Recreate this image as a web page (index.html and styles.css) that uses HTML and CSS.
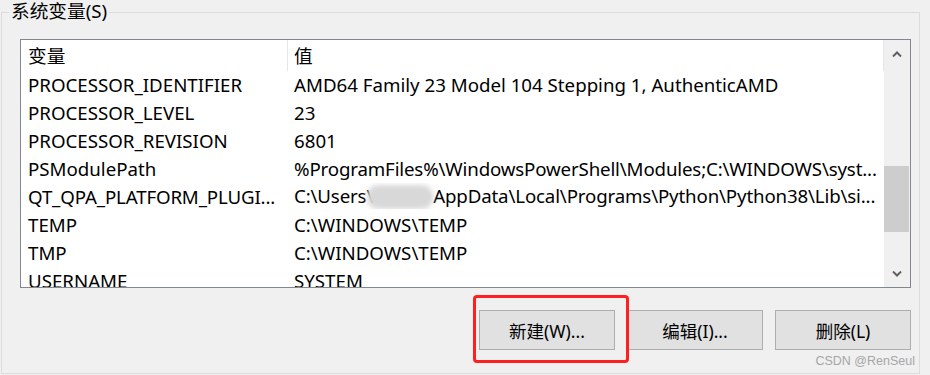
FILE: index.html
```html
<!DOCTYPE html>
<html lang="zh-CN">
<head>
  <meta charset="UTF-8">
  <title>系统变量</title>
  <link rel="stylesheet" href="styles.css">
</head>
<body>
  <div class="group">
    <span class="group-title">系统变量(S)</span>

    <div class="listview">
      <div class="columns">
        <div class="row head">
          <div class="cell name">变量</div>
          <div class="cell value">值</div>
        </div>
        <div class="row">
          <div class="cell name">PROCESSOR_IDENTIFIER</div>
          <div class="cell value">AMD64 Family 23 Model 104 Stepping 1, AuthenticAMD</div>
        </div>
        <div class="row">
          <div class="cell name">PROCESSOR_LEVEL</div>
          <div class="cell value">23</div>
        </div>
        <div class="row">
          <div class="cell name">PROCESSOR_REVISION</div>
          <div class="cell value">6801</div>
        </div>
        <div class="row">
          <div class="cell name">PSModulePath</div>
          <div class="cell value long">%ProgramFiles%\WindowsPowerShell\Modules;C:\WINDOWS\syst...</div>
        </div>
        <div class="row">
          <div class="cell name long">QT_QPA_PLATFORM_PLUGI...</div>
          <div class="cell value long">C:\Users\<span class="blur"></span>AppData\Local\Programs\Python\Python38\Lib\si...</div>
        </div>
        <div class="row">
          <div class="cell name">TEMP</div>
          <div class="cell value">C:\WINDOWS\TEMP</div>
        </div>
        <div class="row">
          <div class="cell name">TMP</div>
          <div class="cell value">C:\WINDOWS\TEMP</div>
        </div>
        <div class="row">
          <div class="cell name">USERNAME</div>
          <div class="cell value">SYSTEM</div>
        </div>
      </div>

      <div class="scrollbar">
        <div class="arrow">
          <svg width="10" height="6" viewBox="0 0 10 6"><polyline points="1,5.5 5,1.5 9,5.5" fill="none" stroke="#606060" stroke-width="2"/></svg>
        </div>
        <div class="track"><div class="thumb"></div></div>
        <div class="arrow">
          <svg width="10" height="6" viewBox="0 0 10 6"><polyline points="1,0.5 5,4.5 9,0.5" fill="none" stroke="#606060" stroke-width="2"/></svg>
        </div>
      </div>
    </div>

    <div class="buttons">
      <span class="marked"><button class="btn">新建(W)...</button></span>
      <button class="btn">编辑(I)...</button>
      <button class="btn">删除(L)</button>
    </div>

    <span class="watermark">CSDN @RenSeul</span>
  </div>
</body>
</html>
```

FILE: styles.css
```css
* {
  margin: 0;
  padding: 0;
  box-sizing: border-box;
}

body {
  font-family: 'Noto Sans', 'Noto Sans CJK SC', sans-serif;
  font-size: 18.7px;
  color: #000;
  background: #f0f0f0;
  width: 930px;
  height: 375px;
  overflow: hidden;
}

/* 分组框 */
.group {
  position: relative;
  margin: 12px 0 0 1px;
  width: 919px;
  height: 362px;
  border: 1px solid #dcdcdc;
  padding: 0 8px 0 18px;
}

.group-title {
  position: absolute;
  top: -12px;
  left: 7px;
  padding: 0 2px;
  background: #f0f0f0;
  line-height: 20px;
}

/* 列表 */
.listview {
  display: flex;
  margin-top: 26px;
  height: 249px;
  border: 1px solid #828790;
  background: #fff;
}

.columns {
  flex: 1;
  overflow: hidden;
}

.row {
  display: flex;
  height: 28px;
  padding-bottom: 2px;
  align-items: center;
  white-space: nowrap;
}

.row.head {
  height: 31px;
  padding-bottom: 0;
  align-items: stretch;
}

.cell {
  overflow: hidden;
}

.cell.name {
  width: 267px;
  padding-left: 7px;
}

.cell.value {
  flex: 1;
  padding-left: 6px;
}

.cell.long {
  letter-spacing: -0.15px;
}

.head .cell {
  display: flex;
  align-items: center;
  padding-bottom: 2px;
  border-right: 1px solid #e5e5e5;
}

.blur {
  display: inline-block;
  width: 66px;
  height: 24px;
  margin: 0 0 0 -6px;
  vertical-align: -6px;
  background: #d8d8d8;
  border-radius: 11px;
  filter: blur(2.5px);
}

/* スクロールバー */
.scrollbar {
  width: 26px;
  display: flex;
  flex-direction: column;
  background: #f0f0f0;
}

.arrow {
  height: 27px;
  display: flex;
  align-items: center;
  justify-content: center;
}

.track {
  flex: 1;
}

.thumb {
  margin: 99px 1px 0 0;
  height: 66px;
  background: #cdcdcd;
}

/* ボタン */
.buttons {
  display: flex;
  justify-content: flex-end;
  gap: 12px;
  margin-top: 22px;
}

.btn {
  width: 136px;
  height: 40px;
  border: 1px solid #adadad;
  background: #e1e1e1;
  font-family: 'Noto Sans', 'Noto Sans CJK SC', sans-serif;
  font-size: 17.5px;
  color: #000;
}

.marked {
  position: relative;
  display: flex;
}

.marked::after {
  content: "";
  position: absolute;
  top: -15px;
  right: -14px;
  bottom: -13px;
  left: -6px;
  border: 3px solid #ff1f1f;
  border-radius: 4px;
}

.watermark {
  position: absolute;
  right: 4px;
  bottom: 5px;
  font-family: 'Liberation Sans', Arial, sans-serif;
  font-size: 12.5px;
  color: #a6a6a6;
}
```
